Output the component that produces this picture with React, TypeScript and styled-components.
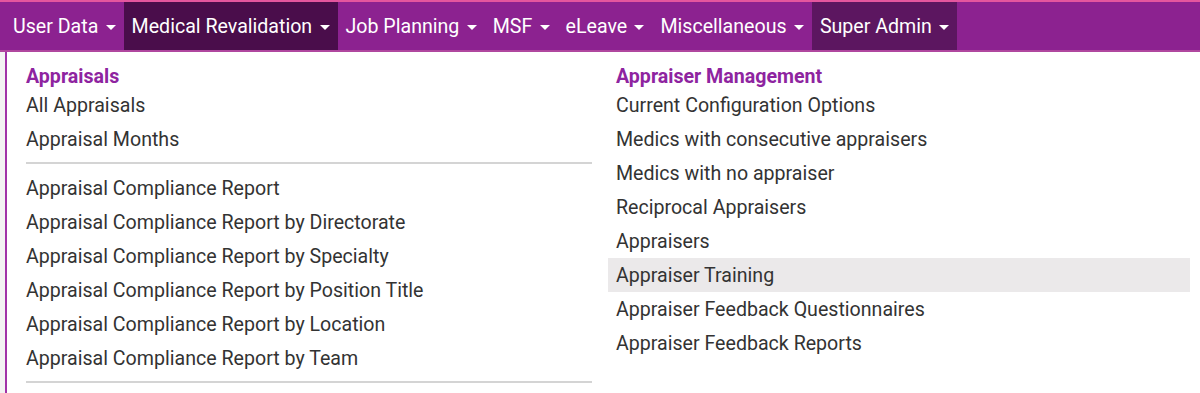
import styled, { createGlobalStyle } from "styled-components";

const GlobalStyle = createGlobalStyle`
  html, body {
    margin: 0;
    padding: 0;
    background: #f3f3f3;
    font-family: Roboto, "Noto Sans", "Liberation Sans", sans-serif;
  }
  * { box-sizing: border-box; }
`;

const Page = styled.div`
  height: 393px;
  overflow: hidden;
  display: flex;
  flex-direction: column;
`;

const NavBar = styled.nav`
  display: flex;
  align-items: stretch;
  height: 52px;
  padding-left: 5px;
  background: #8c2290;
  border-top: 2px solid #e4569e;
  border-bottom: 2px solid #b0479f;
`;

const NavItem = styled.div<{ $bg?: string }>`
  display: flex;
  align-items: center;
  gap: 7.3px;
  padding: 1px 8px 0 8px;
  color: #fff;
  font-size: 19.6px;
  background: ${(p) => p.$bg || "transparent"};
`;

const Caret = styled.span`
  width: 0;
  height: 0;
  border-left: 5px solid transparent;
  border-right: 5px solid transparent;
  border-top: 5px solid #fff;
  margin-top: 2px;
`;

const Panel = styled.div`
  flex: 1;
  margin-left: 5px;
  background: #fff;
  border-left: 2px solid #a133a8;
  padding: 12px 10px 0 11px;
  display: grid;
  grid-template-columns: 582px 582px;
  column-gap: 8px;
  align-content: start;
`;

const Column = styled.div`
  display: flex;
  flex-direction: column;
`;

const Header = styled.div`
  height: 24px;
  padding: 0 8px;
  display: flex;
  align-items: center;
  color: #8e24a0;
  font-size: 19.6px;
  font-weight: 700;
`;

const Item = styled.div<{ $active?: boolean }>`
  height: 34px;
  padding: 0 8px;
  display: flex;
  align-items: center;
  color: #333;
  font-size: 19.6px;
  background: ${(p) => (p.$active ? "#ebe9ea" : "transparent")};
`;

const Divider = styled.div`
  height: 2px;
  margin: 6px 8px 7px 8px;
  background: #d4d4d4;
`;

const navItems: { label: string; bg?: string }[] = [
  { label: "User Data" },
  { label: "Medical Revalidation", bg: "#4a0d4b" },
  { label: "Job Planning" },
  { label: "MSF" },
  { label: "eLeave" },
  { label: "Miscellaneous" },
  { label: "Super Admin", bg: "#5c1660" },
];

const appraisalsTop = ["All Appraisals", "Appraisal Months"];
const appraisalsReports = [
  "Appraisal Compliance Report",
  "Appraisal Compliance Report by Directorate",
  "Appraisal Compliance Report by Specialty",
  "Appraisal Compliance Report by Position Title",
  "Appraisal Compliance Report by Location",
  "Appraisal Compliance Report by Team",
];
const management = [
  "Current Configuration Options",
  "Medics with consecutive appraisers",
  "Medics with no appraiser",
  "Reciprocal Appraisers",
  "Appraisers",
  "Appraiser Training",
  "Appraiser Feedback Questionnaires",
  "Appraiser Feedback Reports",
];

export default function App() {
  return (
    <Page>
      <GlobalStyle />
      <NavBar>
        {navItems.map((n) => (
          <NavItem key={n.label} $bg={n.bg}>
            {n.label}
            <Caret />
          </NavItem>
        ))}
      </NavBar>
      <Panel>
        <Column>
          <Header>Appraisals</Header>
          {appraisalsTop.map((t) => (
            <Item key={t}>{t}</Item>
          ))}
          <Divider />
          {appraisalsReports.map((t) => (
            <Item key={t}>{t}</Item>
          ))}
          <Divider />
        </Column>
        <Column>
          <Header>Appraiser Management</Header>
          {management.map((t) => (
            <Item key={t} $active={t === "Appraiser Training"}>
              {t}
            </Item>
          ))}
        </Column>
      </Panel>
    </Page>
  );
}
